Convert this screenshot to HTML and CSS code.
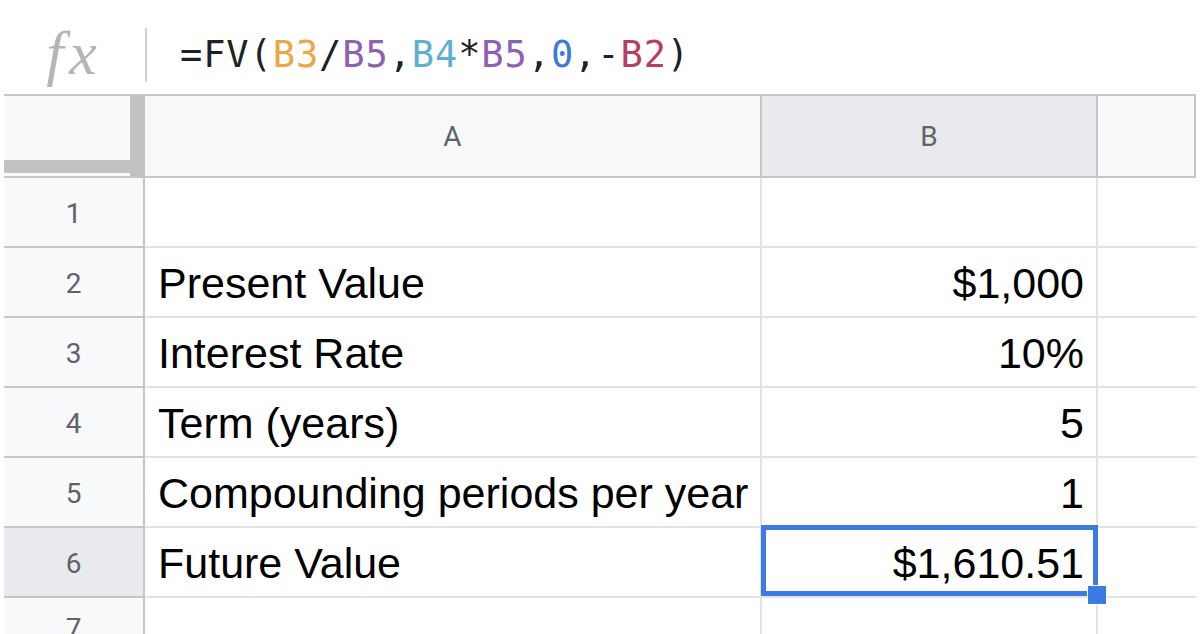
FILE: index.html
```html
<!DOCTYPE html>
<html lang="en">
<head>
  <meta charset="UTF-8" />
  <title>Future Value</title>
  <link rel="stylesheet" href="styles.css">
</head>
<body>
  <div class="formula-bar">
    <div class="fx">fx</div>
    <div class="sep"></div>
    <div class="formula">=FV(<span class="r1">B3</span>/<span class="r2">B5</span>,<span class="r3">B4</span>*<span class="r2">B5</span>,<span class="r4">0</span>,-<span class="r5">B2</span>)</div>
  </div>

  <div class="sheet">
    <div class="head corner"></div>
    <div class="head">A</div>
    <div class="head active">B</div>
    <div class="head"></div>

    <div class="rownum">1</div>
    <div class="cell"></div>
    <div class="cell num"></div>
    <div class="cell"></div>

    <div class="rownum">2</div>
    <div class="cell">Present Value</div>
    <div class="cell num">$1,000</div>
    <div class="cell"></div>

    <div class="rownum">3</div>
    <div class="cell">Interest Rate</div>
    <div class="cell num">10%</div>
    <div class="cell"></div>

    <div class="rownum">4</div>
    <div class="cell">Term (years)</div>
    <div class="cell num">5</div>
    <div class="cell"></div>

    <div class="rownum">5</div>
    <div class="cell">Compounding periods per year</div>
    <div class="cell num">1</div>
    <div class="cell"></div>

    <div class="rownum active">6</div>
    <div class="cell">Future Value</div>
    <div class="cell num selected">$1,610.51<span class="selection"></span><span class="handle"></span></div>
    <div class="cell"></div>

    <div class="rownum">7</div>
    <div class="cell"></div>
    <div class="cell num"></div>
    <div class="cell"></div>
  </div>
</body>
</html>
```

FILE: styles.css
```css
body {
  margin: 0;
  background: #fff;
  font-family: 'Liberation Sans', Arial, sans-serif;
  overflow: hidden;
}
.formula-bar {
  height: 94px;
  display: flex;
  align-items: center;
  border-bottom: 2px solid #c7c7c7;
  margin-left: 4px;
  margin-right: 4px;
}
.fx {
  width: 141px;
  text-align: center;
  font-family: 'Liberation Serif', serif;
  font-style: italic;
  font-size: 62px;
  letter-spacing: 6px;
  color: #b5b5b5;
  margin-top: 12px;
}
.sep {
  width: 2px;
  height: 54px;
  background: #d0d0d0;
  margin-top: 16px;
}
.formula {
  margin-left: 33px;
  margin-top: 14px;
  font-family: 'DejaVu Sans Mono', monospace;
  font-size: 37px;
  letter-spacing: 0.9px;
  color: #202124;
}
.r1 { color: #eea546; }
.r2 { color: #8e5fb4; }
.r3 { color: #5cb0d3; }
.r4 { color: #3c7bd6; }
.r5 { color: #b83d62; }

.sheet {
  display: grid;
  grid-template-columns: 141px 617px 336px 1fr;
  grid-template-rows: 82px repeat(6, 70px) 60px;
  margin-left: 4px;
  margin-right: 4px;
}
.head, .rownum {
  background: #f8f9fa;
  color: #5f6368;
  font-family: Roboto, sans-serif;
  font-size: 28px;
  display: flex;
  align-items: center;
  justify-content: center;
  border-right: 2px solid #c4c7c5;
  border-bottom: 2px solid #c4c7c5;
}
.head:last-child {
  border-right: none;
}
.head.active, .rownum.active {
  background: #e8eaed;
}
.corner {
  border-right: 15px solid #c2c2c2;
  background: linear-gradient(to top, #f8f9fa 3px, #c2c2c2 3px, #c2c2c2 16px, #f8f9fa 16px);
}
.rownum {
  padding-top: 2px;
}
.cell {
  border-right: 2px solid #e2e3e3;
  border-bottom: 2px solid #e2e3e3;
  font-size: 43px;
  color: #000;
  display: flex;
  align-items: center;
  padding: 3px 12px 0 13px;
  white-space: nowrap;
}
.cell:nth-child(4n) {
  border-right: none;
}
.num {
  justify-content: flex-end;
}
.selected {
  position: relative;
}
.selection {
  position: absolute;
  top: -3px;
  left: -1px;
  right: -2px;
  bottom: 0;
  border: 5px solid #3b7be4;
}
.handle {
  position: absolute;
  right: -11px;
  bottom: -9px;
  width: 18px;
  height: 18px;
  background: #3b7be4;
  border: 1.5px solid #fff;
}
```
